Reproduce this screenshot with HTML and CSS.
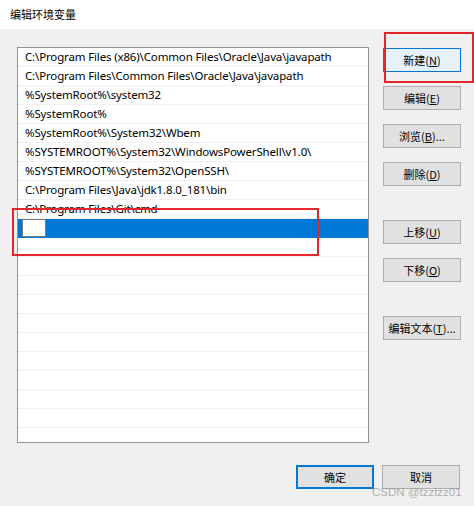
FILE: index.html
```html
<!DOCTYPE html>
<html lang="zh-CN">
<head>
<meta charset="utf-8">
<title>编辑环境变量</title>
<link rel="stylesheet" href="styles.css">
</head>
<body>
<div class="dialog">
  <div class="titlebar">编辑环境变量</div>
  <div class="content">
    <div class="main">
      <div class="list">
        <div class="row">C:\Program Files (x86)\Common Files\Oracle\Java\javapath</div>
        <div class="row">C:\Program Files\Common Files\Oracle\Java\javapath</div>
        <div class="row">%SystemRoot%\system32</div>
        <div class="row">%SystemRoot%</div>
        <div class="row">%SystemRoot%\System32\Wbem</div>
        <div class="row">%SYSTEMROOT%\System32\WindowsPowerShell\v1.0\</div>
        <div class="row">%SYSTEMROOT%\System32\OpenSSH\</div>
        <div class="row">C:\Program Files\Java\jdk1.8.0_181\bin</div>
        <div class="row">C:\Program Files\Git\cmd</div>
        <div class="row selected"><span class="editbox"></span></div>
        <div class="row"></div>
        <div class="row"></div>
        <div class="row"></div>
        <div class="row"></div>
        <div class="row"></div>
        <div class="row"></div>
        <div class="row"></div>
        <div class="row"></div>
        <div class="row"></div>
        <div class="row"></div>
        <div class="row"></div>
      </div>
      <div class="side">
        <div class="group">
          <button class="btn hover">新建(<u>N</u>)</button>
          <button class="btn">编辑(<u>E</u>)</button>
          <button class="btn">浏览(<u>B</u>)...</button>
          <button class="btn">删除(<u>D</u>)</button>
        </div>
        <div class="group">
          <button class="btn">上移(<u>U</u>)</button>
          <button class="btn">下移(<u>O</u>)</button>
        </div>
        <div class="group">
          <button class="btn">编辑文本(<u>T</u>)...</button>
        </div>
      </div>
    </div>
    <div class="footer">
      <button class="btn default">确定</button>
      <button class="btn">取消</button>
    </div>
  </div>
  <div class="mark mark-list"></div>
  <div class="mark mark-new"></div>
  <div class="watermark">CSDN @tzztzz01</div>
</div>
</body>
</html>
```
FILE: styles.css
```css
html, body {
  margin: 0;
  padding: 0;
  background: #f0f0f0;
}
.dialog {
  position: relative;
  width: 474px;
  height: 506px;
  overflow: hidden;
  font-family: "Noto Sans", "Noto Sans CJK SC", sans-serif;
  font-size: 12px;
  color: #000;
  background: #f0f0f0;
}
.titlebar {
  height: 29px;
  background: #fff;
  box-sizing: border-box;
  padding: 6px 0 0 10px;
  font-family: "Noto Sans CJK SC", sans-serif;
  font-size: 11px;
  line-height: 16px;
}
.content {
  padding: 18px 13px 0 17px;
}
.main {
  display: flex;
  gap: 14px;
}
.list {
  width: 352px;
  height: 396px;
  box-sizing: border-box;
  border: 1px solid #8f949b;
  background: #fff;
  overflow: hidden;
}
.row {
  height: 18px;
  border-bottom: 1px solid #f0f0f0;
  padding-left: 7px;
  line-height: 18px;
  white-space: nowrap;
  font-size: 11.5px;
  letter-spacing: -0.15px;
}
.row.selected {
  background: #0078d7;
  border-bottom-color: #0078d7;
  padding-left: 4px;
  display: flex;
  align-items: stretch;
}
.editbox {
  width: 22px;
  background: #fff;
  border: 1px solid #7a7a7a;
}
.side {
  display: flex;
  flex-direction: column;
  gap: 34px;
  padding-top: 1px;
}
.group {
  display: flex;
  flex-direction: column;
  gap: 14px;
}
.btn {
  width: 78px;
  height: 24px;
  box-sizing: border-box;
  border: 1px solid #adadad;
  background: #e1e1e1;
  font-family: "Noto Sans CJK SC", sans-serif;
  font-size: 11px;
  color: #000;
  padding: 0;
  line-height: 20px;
}
.btn.hover {
  border-color: #0078d7;
  background: #e5f1fb;
}
.btn.default {
  border: 2px solid #0078d7;
}
.footer {
  display: flex;
  justify-content: flex-end;
  gap: 8px;
  padding: 22px 1px 0 0;
}
.mark {
  position: absolute;
  border: 2px solid #e4262c;
  box-sizing: border-box;
}
.mark-list {
  left: 12px;
  top: 208px;
  width: 307px;
  height: 48px;
}
.mark-new {
  left: 384px;
  top: 32px;
  width: 90px;
  height: 51px;
}
.watermark {
  position: absolute;
  left: 372px;
  top: 486px;
  font-family: "Liberation Sans", sans-serif;
  font-size: 11.5px;
  color: rgba(150, 150, 150, 0.75);
  white-space: nowrap;
}
```
